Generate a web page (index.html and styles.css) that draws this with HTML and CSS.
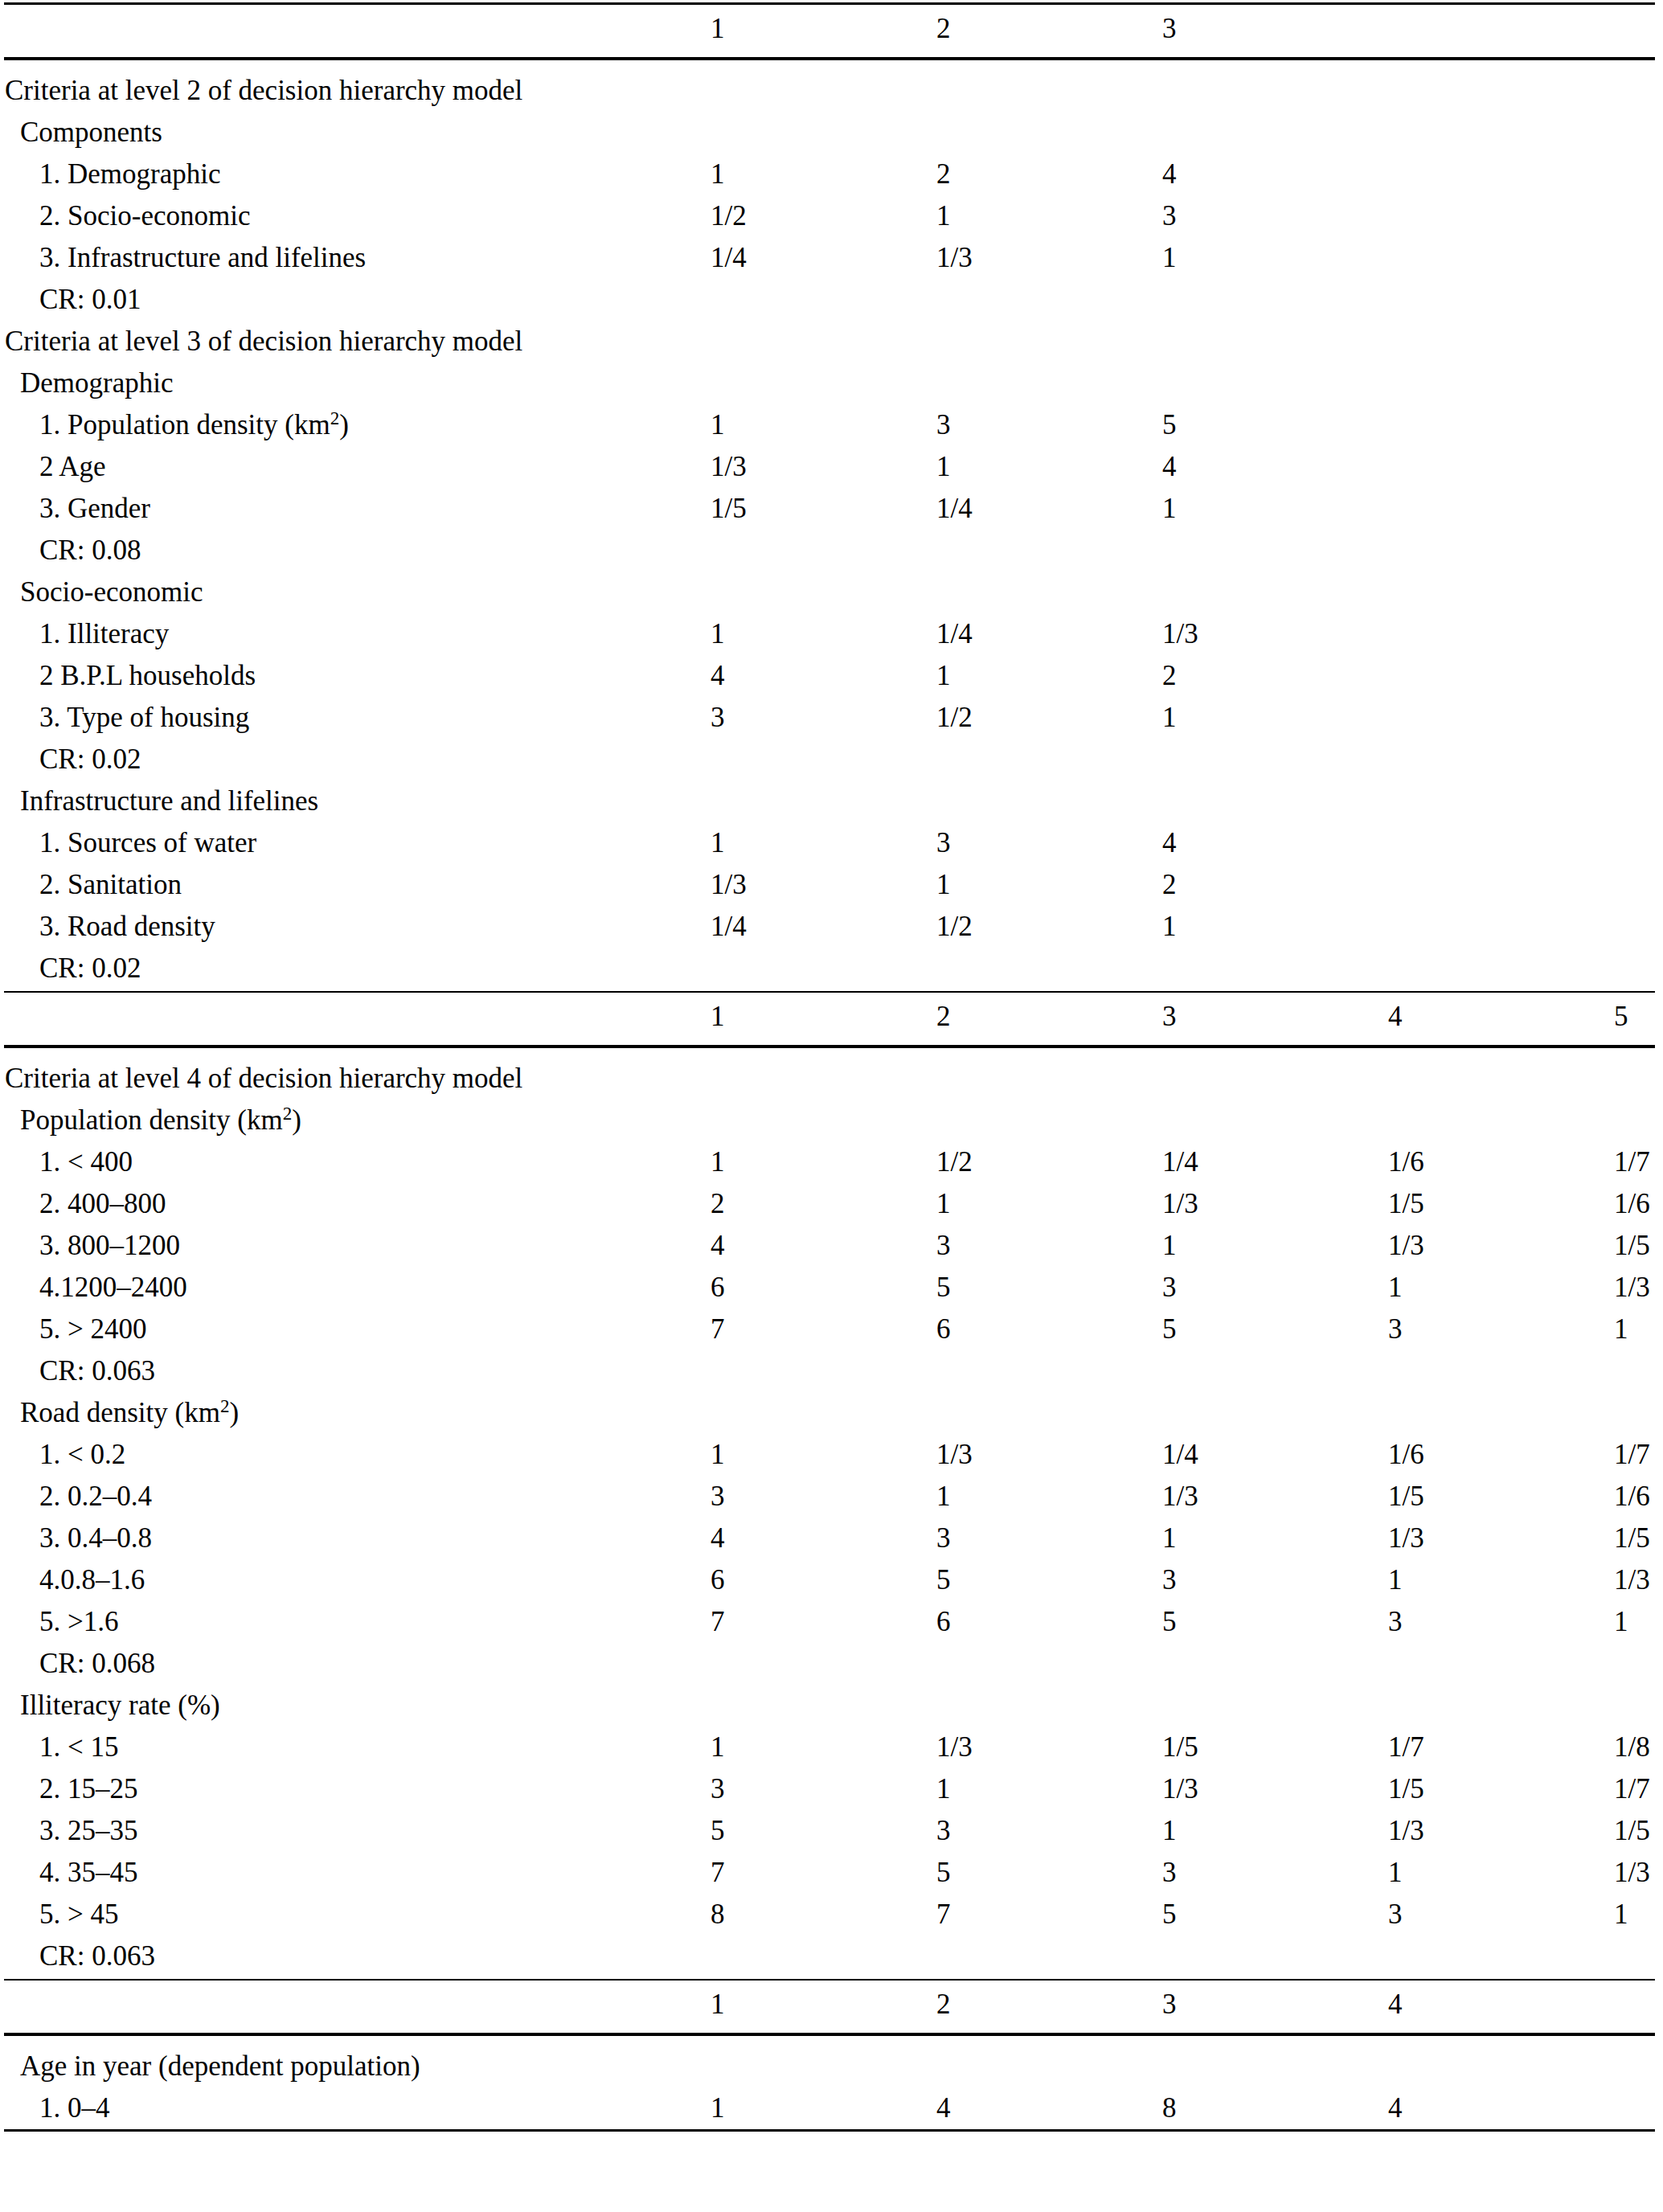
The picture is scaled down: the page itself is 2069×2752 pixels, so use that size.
FILE: index.html
```html
<!DOCTYPE html>
<html lang="en">
<head>
<meta charset="utf-8">
<title>Pairwise comparison matrices</title>
<link rel="stylesheet" href="styles.css">
</head>
<body>
<div class="page">
<table class="matrix first-table">
  <colgroup><col class="c-label"><col class="c-num"><col class="c-num"><col class="c-num"><col class="c-num"><col class="c-last"></colgroup>
  <thead><tr><th></th><th>1</th><th>2</th><th>3</th><th></th><th></th></tr></thead>
  <tbody>
    <tr><td class="l0">Criteria at level 2 of decision hierarchy model</td><td></td><td></td><td></td><td></td><td></td></tr>
    <tr><td class="l1">Components</td><td></td><td></td><td></td><td></td><td></td></tr>
    <tr><td class="l2">1. Demographic</td><td>1</td><td>2</td><td>4</td><td></td><td></td></tr>
    <tr><td class="l2">2. Socio-economic</td><td>1/2</td><td>1</td><td>3</td><td></td><td></td></tr>
    <tr><td class="l2">3. Infrastructure and lifelines</td><td>1/4</td><td>1/3</td><td>1</td><td></td><td></td></tr>
    <tr><td class="l2">CR: 0.01</td><td></td><td></td><td></td><td></td><td></td></tr>
    <tr><td class="l0">Criteria at level 3 of decision hierarchy model</td><td></td><td></td><td></td><td></td><td></td></tr>
    <tr><td class="l1">Demographic</td><td></td><td></td><td></td><td></td><td></td></tr>
    <tr><td class="l2">1. Population density (km<sup>2</sup>)</td><td>1</td><td>3</td><td>5</td><td></td><td></td></tr>
    <tr><td class="l2">2 Age</td><td>1/3</td><td>1</td><td>4</td><td></td><td></td></tr>
    <tr><td class="l2">3. Gender</td><td>1/5</td><td>1/4</td><td>1</td><td></td><td></td></tr>
    <tr><td class="l2">CR: 0.08</td><td></td><td></td><td></td><td></td><td></td></tr>
    <tr><td class="l1">Socio-economic</td><td></td><td></td><td></td><td></td><td></td></tr>
    <tr><td class="l2">1. Illiteracy</td><td>1</td><td>1/4</td><td>1/3</td><td></td><td></td></tr>
    <tr><td class="l2">2 B.P.L households</td><td>4</td><td>1</td><td>2</td><td></td><td></td></tr>
    <tr><td class="l2">3. Type of housing</td><td>3</td><td>1/2</td><td>1</td><td></td><td></td></tr>
    <tr><td class="l2">CR: 0.02</td><td></td><td></td><td></td><td></td><td></td></tr>
    <tr><td class="l1">Infrastructure and lifelines</td><td></td><td></td><td></td><td></td><td></td></tr>
    <tr><td class="l2">1. Sources of water</td><td>1</td><td>3</td><td>4</td><td></td><td></td></tr>
    <tr><td class="l2">2. Sanitation</td><td>1/3</td><td>1</td><td>2</td><td></td><td></td></tr>
    <tr><td class="l2">3. Road density</td><td>1/4</td><td>1/2</td><td>1</td><td></td><td></td></tr>
    <tr><td class="l2">CR: 0.02</td><td></td><td></td><td></td><td></td><td></td></tr>
  </tbody>
</table>
<table class="matrix">
  <colgroup><col class="c-label"><col class="c-num"><col class="c-num"><col class="c-num"><col class="c-num"><col class="c-last"></colgroup>
  <thead><tr><th></th><th>1</th><th>2</th><th>3</th><th>4</th><th>5</th></tr></thead>
  <tbody>
    <tr><td class="l0">Criteria at level 4 of decision hierarchy model</td><td></td><td></td><td></td><td></td><td></td></tr>
    <tr><td class="l1">Population density (km<sup>2</sup>)</td><td></td><td></td><td></td><td></td><td></td></tr>
    <tr><td class="l2">1. &lt; 400</td><td>1</td><td>1/2</td><td>1/4</td><td>1/6</td><td>1/7</td></tr>
    <tr><td class="l2">2. 400–800</td><td>2</td><td>1</td><td>1/3</td><td>1/5</td><td>1/6</td></tr>
    <tr><td class="l2">3. 800–1200</td><td>4</td><td>3</td><td>1</td><td>1/3</td><td>1/5</td></tr>
    <tr><td class="l2">4.1200–2400</td><td>6</td><td>5</td><td>3</td><td>1</td><td>1/3</td></tr>
    <tr><td class="l2">5. &gt; 2400</td><td>7</td><td>6</td><td>5</td><td>3</td><td>1</td></tr>
    <tr><td class="l2">CR: 0.063</td><td></td><td></td><td></td><td></td><td></td></tr>
    <tr><td class="l1">Road density (km<sup>2</sup>)</td><td></td><td></td><td></td><td></td><td></td></tr>
    <tr><td class="l2">1. &lt; 0.2</td><td>1</td><td>1/3</td><td>1/4</td><td>1/6</td><td>1/7</td></tr>
    <tr><td class="l2">2. 0.2–0.4</td><td>3</td><td>1</td><td>1/3</td><td>1/5</td><td>1/6</td></tr>
    <tr><td class="l2">3. 0.4–0.8</td><td>4</td><td>3</td><td>1</td><td>1/3</td><td>1/5</td></tr>
    <tr><td class="l2">4.0.8–1.6</td><td>6</td><td>5</td><td>3</td><td>1</td><td>1/3</td></tr>
    <tr><td class="l2">5. &gt;1.6</td><td>7</td><td>6</td><td>5</td><td>3</td><td>1</td></tr>
    <tr><td class="l2">CR: 0.068</td><td></td><td></td><td></td><td></td><td></td></tr>
    <tr><td class="l1">Illiteracy rate (%)</td><td></td><td></td><td></td><td></td><td></td></tr>
    <tr><td class="l2">1. &lt; 15</td><td>1</td><td>1/3</td><td>1/5</td><td>1/7</td><td>1/8</td></tr>
    <tr><td class="l2">2. 15–25</td><td>3</td><td>1</td><td>1/3</td><td>1/5</td><td>1/7</td></tr>
    <tr><td class="l2">3. 25–35</td><td>5</td><td>3</td><td>1</td><td>1/3</td><td>1/5</td></tr>
    <tr><td class="l2">4. 35–45</td><td>7</td><td>5</td><td>3</td><td>1</td><td>1/3</td></tr>
    <tr><td class="l2">5. &gt; 45</td><td>8</td><td>7</td><td>5</td><td>3</td><td>1</td></tr>
    <tr><td class="l2">CR: 0.063</td><td></td><td></td><td></td><td></td><td></td></tr>
  </tbody>
</table>
<table class="matrix last-table">
  <colgroup><col class="c-label"><col class="c-num"><col class="c-num"><col class="c-num"><col class="c-num"><col class="c-last"></colgroup>
  <thead><tr><th></th><th>1</th><th>2</th><th>3</th><th>4</th><th></th></tr></thead>
  <tbody>
    <tr><td class="l1">Age in year (dependent population)</td><td></td><td></td><td></td><td></td><td></td></tr>
    <tr><td class="l2">1. 0–4</td><td>1</td><td>4</td><td>8</td><td>4</td><td></td></tr>
  </tbody>
</table>
</div>
</body>
</html>
```
FILE: styles.css
```css
html, body {
  margin: 0;
  padding: 0;
  background: #ffffff;
}

.page {
  padding: 3px 0 0 5px;
  font-family: "Liberation Serif", "Times New Roman", serif;
  font-size: 35px;
  color: #000000;
}

.matrix {
  width: 2054px;
  table-layout: fixed;
  border-collapse: separate;
  border-spacing: 0;
  border-top: 2px solid #000;
}

.first-table {
  border-top-width: 3px;
}

.last-table {
  border-bottom: 3px solid #000;
}

.c-label { width: 879px; }
.c-num { width: 281px; }
.c-last { width: 51px; }

.matrix th,
.matrix td {
  padding: 0;
  line-height: 52px;
  text-align: left;
  font-weight: normal;
  white-space: nowrap;
  vertical-align: baseline;
}

.matrix thead th {
  padding-top: 4px;
  padding-bottom: 9px;
  border-bottom: 4px solid #000;
}

.matrix tbody tr:first-child td {
  padding-top: 12px;
}

.matrix tbody tr:last-child td {
  padding-bottom: 2px;
}

.last-table tbody tr:last-child td {
  padding-bottom: 0;
}

.l0 { padding-left: 1px !important; }
.l1 { padding-left: 20px !important; }
.l2 { padding-left: 44px !important; }

sup {
  font-size: 23px;
  line-height: 0;
  vertical-align: 12px;
}
```
